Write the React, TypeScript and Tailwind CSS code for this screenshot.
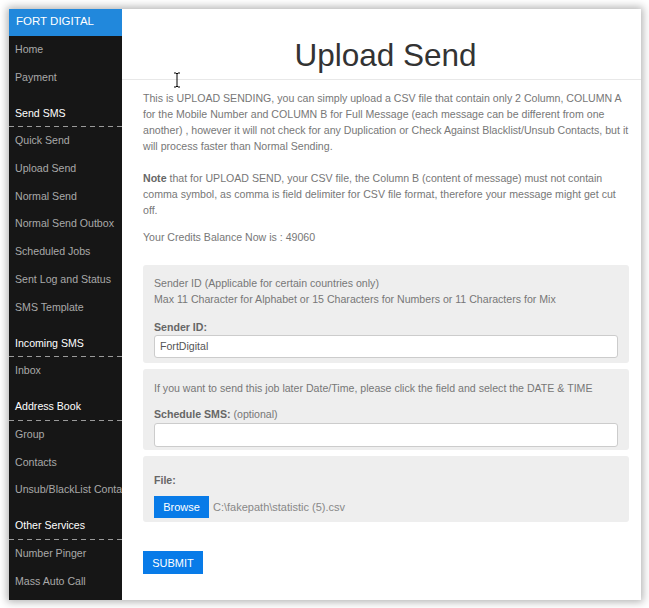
import React from 'react';

const font = { fontFamily: '"Liberation Sans", Arial, sans-serif' };

type NavGroup = { title?: string; items: string[] };

const groups: NavGroup[] = [
    { items: ['Home', 'Payment'] },
    { title: 'Send SMS', items: ['Quick Send', 'Upload Send', 'Normal Send', 'Normal Send Outbox', 'Scheduled Jobs', 'Sent Log and Status', 'SMS Template'] },
    { title: 'Incoming SMS', items: ['Inbox'] },
    { title: 'Address Book', items: ['Group', 'Contacts', 'Unsub/BlackList Contacts'] },
    { title: 'Other Services', items: ['Number Pinger', 'Mass Auto Call'] },
];

const Sidebar: React.FC = () => (
    <div className="w-[113px] shrink-0 bg-[#161616] overflow-hidden">
        <div className="h-[27px] bg-[#2188dc] text-white text-[11.5px] leading-[25px] pl-[7px] whitespace-nowrap">
            FORT DIGITAL
        </div>
        {groups.map((g, i) => (
            <div key={i}>
                {g.title && (
                    <>
                        <div className="pt-[13.5px] pb-[5.5px] pl-[6px] text-[10.6px] leading-[16px] text-white whitespace-nowrap">
                            {g.title}
                        </div>
                        <div className="h-px bg-[repeating-linear-gradient(90deg,#9a9a9a_0_5px,transparent_5px_9px)]" />
                    </>
                )}
                {g.items.map((item) => (
                    <div key={item} className="h-[27.7px] leading-[27.7px] pl-[6px] text-[10.6px] text-[#a9a9a9] whitespace-nowrap">
                        {item}
                    </div>
                ))}
            </div>
        ))}
    </div>
);

const Panel: React.FC<{ className?: string; children: React.ReactNode }> = ({ className = '', children }) => (
    <div className={`bg-[#eeeeee] rounded-[3px] px-[11px] ${className}`}>{children}</div>
);

export default function App() {
    return (
        <div className="w-[649px] h-[608px] bg-white pt-[9px] pl-[9px] pr-[8px] pb-[8px]" style={font}>
            <div className="relative flex w-[632px] h-[591px] bg-white shadow-[0_0_8px_2px_rgba(0,0,0,0.3)] overflow-hidden">
                <Sidebar />
                <div className="flex-1 min-w-0">
                    <div className="h-[71px] border-b border-[#e8e8e8] pt-[30px] pl-[8px] text-center">
                        <h1 className="text-[31.5px] leading-[32px] text-[#333]">Upload Send</h1>
                    </div>
                    <div className="pl-[21px] pr-[12px] text-[10.6px] leading-[16px] text-[#777]">
                        <p className="mt-[10px]">
                            This is UPLOAD SENDING, you can simply upload a CSV file that contain only 2 Column, COLUMN A for the Mobile Number and COLUMN B for Full Message (each message can be different from one another) , however it will not check for any Duplication or Check Against Blacklist/Unsub Contacts, but it will process faster than Normal Sending.
                        </p>
                        <p className="mt-[16px]">
                            <b className="text-[#666]">Note</b> that for UPLOAD SEND, your CSV file, the Column B (content of message) must not contain comma symbol, as comma is field delimiter for CSV file format, therefore your message might get cut off.
                        </p>
                        <p className="mt-[11px]">Your Credits Balance Now is : 49060</p>

                        <Panel className="mt-[20px] pt-[10px] pb-[5px]">
                            <div>Sender ID (Applicable for certain countries only)</div>
                            <div>Max 11 Character for Alphabet or 15 Characters for Numbers or 11 Characters for Mix</div>
                            <div className="mt-[12px] font-bold text-[#666]">Sender ID:</div>
                            <div className="h-[23px] bg-white border border-[#cccccc] rounded-[3px] px-[5px] leading-[21px] text-[#555]">
                                FortDigital
                            </div>
                        </Panel>

                        <Panel className="mt-[6px] pt-[11px] pb-[3px]">
                            <div>If you want to send this job later Date/Time, please click the field and select the DATE &amp; TIME</div>
                            <div className="mt-[10px]">
                                <b className="text-[#666]">Schedule SMS:</b> (optional)
                            </div>
                            <div className="mt-[1px] h-[24px] bg-white border border-[#cccccc] rounded-[3px]" />
                        </Panel>

                        <Panel className="mt-[6px] pt-[16px] pb-[4px]">
                            <div className="font-bold text-[#666]">File:</div>
                            <div className="mt-[8px] flex items-center gap-[4px]">
                                <span className="h-[22px] w-[55px] bg-[#087be8] text-white text-[11px] leading-[22px] text-center">Browse</span>
                                <span className="text-[11px] text-[#888]">C:\fakepath\statistic (5).csv</span>
                            </div>
                        </Panel>

                        <button className="mt-[29px] h-[23px] w-[60px] bg-[#087be8] text-white text-[11px]">SUBMIT</button>
                    </div>
                </div>
                <svg className="absolute left-[164px] top-[63px]" width="8" height="16" viewBox="0 0 8 16">
                    <path d="M1 1h2l1 1 1-1h2M4 2v12M1 15h2l1-1 1 1h2" stroke="#000" strokeWidth="1" fill="none" />
                </svg>
            </div>
        </div>
    );
}
